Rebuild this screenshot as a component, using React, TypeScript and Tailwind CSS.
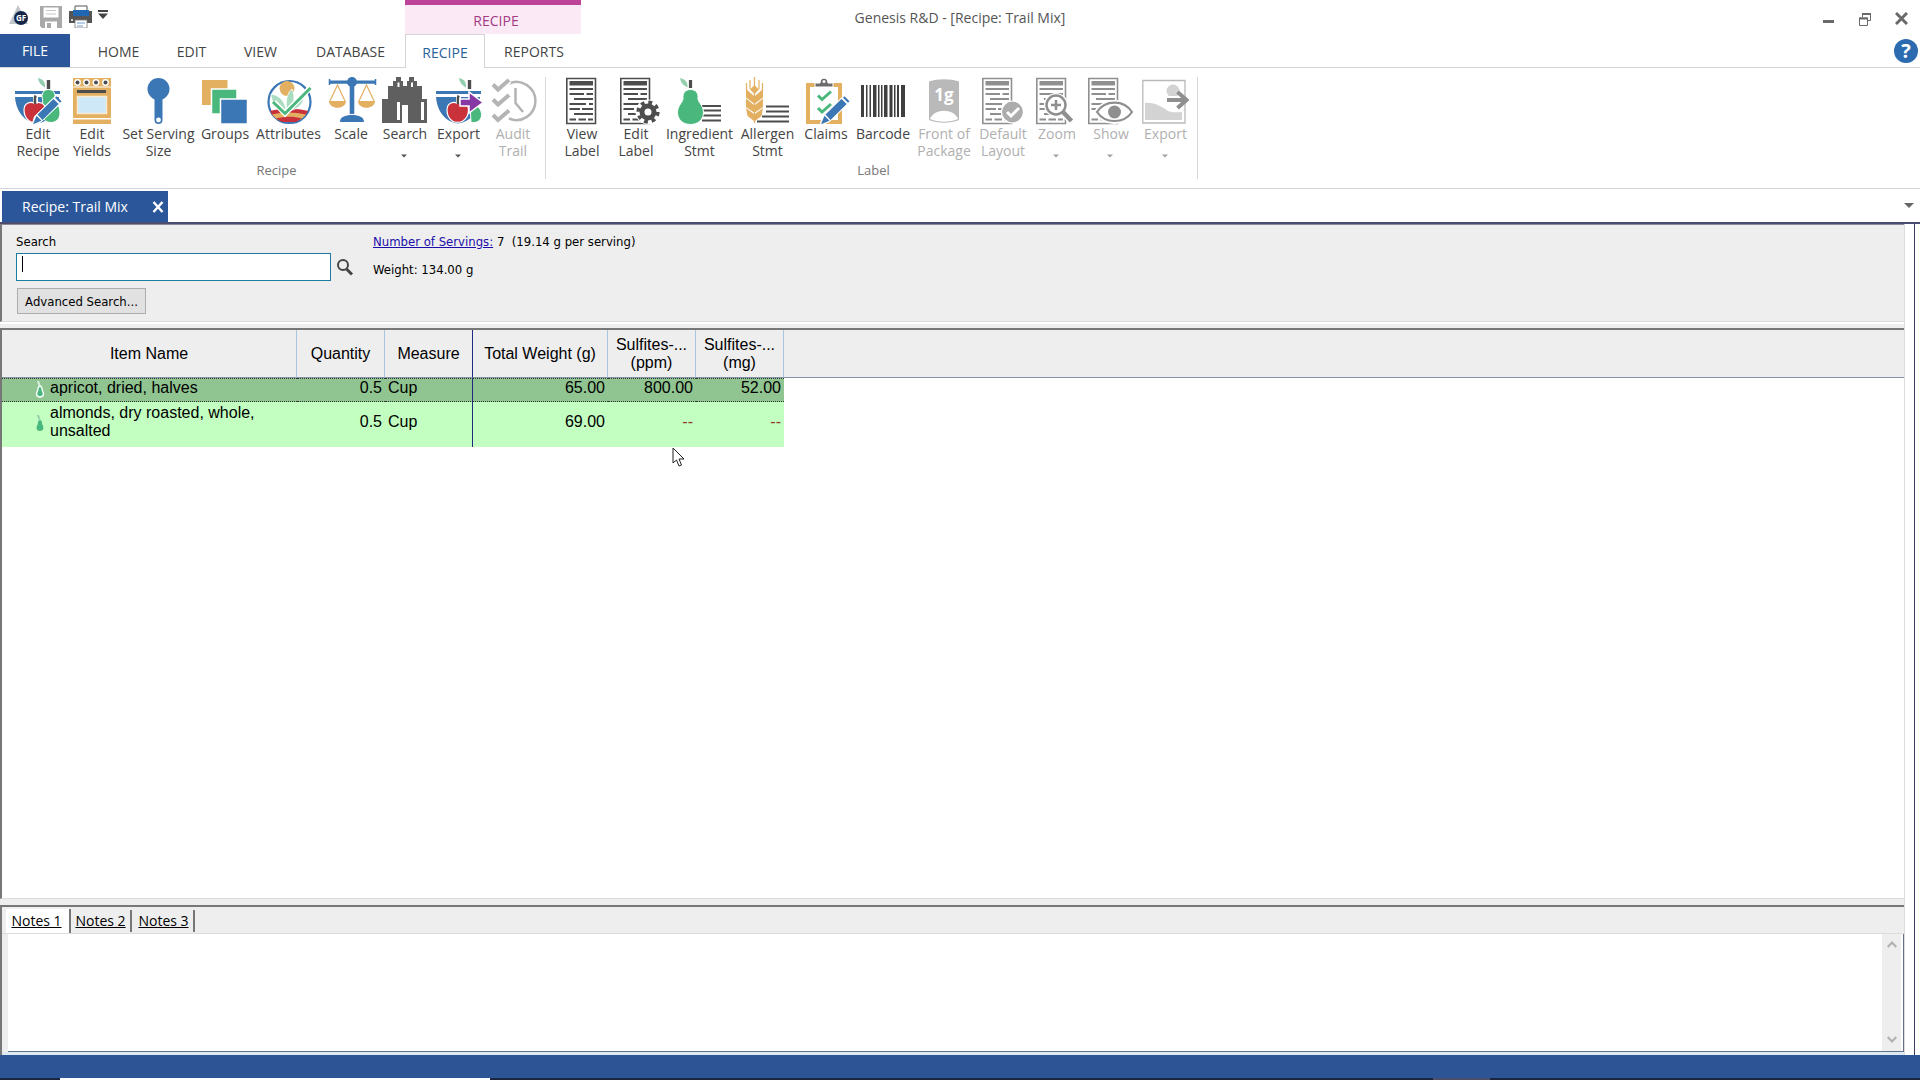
import type { ReactNode } from "react";

const STEEL = "#3b76b5";
const GREEN = "#4ab87c";
const RED = "#c9323a";
const TAN = "#e3b062";
const DARK = "#4d4d4d";
const MUTE = "#b4b4b4";
const MID = "#8f8f8f";

function Icon({ children }: { children: ReactNode }) {
  return (
    <svg viewBox="0 0 48 48" className="block size-12 overflow-visible" fill="none" aria-hidden="true">
      {children}
    </svg>
  );
}

function Pencil() {
  return (
    <g>
      <path d="M18 48 20.5 39.5 41 19.5 47.5 25.5 27 45Z" fill="#fff" stroke="#fff" strokeWidth="1" />
      <path d="M23.500 37.500 39.500 22 44.700 27 28.500 43Z" fill={STEEL} />
      <path d="M41 20.700 42.500 19.300 47.500 24.300 46 25.700Z" fill={STEEL} />
      <path d="M22.500 38.800 27.500 43.800 19 47.200Z" fill={STEEL} />
    </g>
  );
}

function Bowl() {
  return (
    <g>
      <path d="M1 14H46V17H1Z" fill={STEEL} />
      <path d="M1 20H45C45 33 36 45 23 46.500 10 45 2 34 1 20Z" fill={STEEL} />
      <path d="M34.500 3V12" stroke="#fff" strokeWidth="6" />
      <path d="M34.500 3V12" stroke={DARK} strokeWidth="3.400" />
      <path d="M24 1C29 2 31.500 5 31 10.500 26.500 8 24.500 5 24 1Z" fill="#93cfae" />
    </g>
  );
}

function Apple() {
  return (
    <g>
      <path
        d="M20.500 26.500C24 24 31.500 25.500 31.500 33 31.500 40 26 46.500 20.500 45 15 46.500 10 40 10 33 10 25.500 17 24 20.500 26.500Z"
        fill={RED}
        stroke="#fff"
        strokeWidth="1.200"
      />
      <path d="M21.500 19V26.500" stroke="#fff" strokeWidth="5" />
      <path d="M21.500 18.500C20.500 21 21 24 21 27" stroke={DARK} strokeWidth="2.500" />
    </g>
  );
}

function EditRecipeIcon() {
  return (
    <Icon>
      <Bowl />
      <path
        d="M34.500 12.500C39 12.500 41.500 16 41 20 40.800 24 46 28 46 36 46 42 42 45.500 37 45.500 31 45.500 28 41 28 35 28 28 29.500 25 28 20 27.800 16 30 12.500 34.500 12.500Z"
        fill={GREEN}
        stroke="#fff"
        strokeWidth="1"
      />
      <Apple />
      <Pencil />
    </Icon>
  );
}

function StoveIcon() {
  return (
    <Icon>
      <path d="M5 1H43V9.500H5ZM5 10.500H43V41H5ZM5 42.500H43V47H5Z" fill={TAN} />
      {[9.5, 18.5, 28, 37.5].map((x) => (
        <g key={x}>
          <circle cx={x} cy="5.500" r="3.400" fill="#fff" />
          <circle cx={x} cy="5.500" r="2" fill={DARK} />
        </g>
      ))}
      <path d="M9 13H38V16H9Z" fill={DARK} />
      <path d="M9.500 19.500H38.500V36.500H9.500Z" fill="#cfe8f8" stroke="#f7ead2" strokeWidth="1.500" />
    </Icon>
  );
}

function SpoonIcon() {
  return (
    <Icon>
      <circle cx="23.500" cy="12" r="11" fill={STEEL} />
      <path d="M19.500 20H27.500V43A4 4 0 0 1 19.500 43Z" fill={STEEL} />
      <circle cx="23.500" cy="43" r="2.400" fill="#fff" />
    </Icon>
  );
}

function GroupsIcon() {
  return (
    <Icon>
      <path d="M1 3H26.500V28H1Z" fill={TAN} />
      <path d="M10.500 12H36V37H10.500Z" fill={GREEN} stroke="#fff" strokeWidth="1.500" />
      <path d="M19.500 22H46.500V47H19.500Z" fill={STEEL} stroke="#fff" strokeWidth="1.500" />
    </Icon>
  );
}

function AttributesIcon() {
  return (
    <Icon>
      <circle cx="24.500" cy="25" r="21" fill="#fff" stroke={STEEL} strokeWidth="2.200" />
      <circle cx="22" cy="11.500" r="7.500" fill={TAN} />
      <path d="M5 34C16 31 32 31 43 34L40 39H8Z" fill={RED} />
      <path d="M7 37.500C18 34.500 30 35 41 37.500L36 42.500H12Z" fill={TAN} />
      <path d="M11 41.500C20 39 29 39 37 41.500L31 45H17Z" fill={RED} />
      <path d="M21 34C12 32 6 25 6 17 14 18 21 25 21 34ZM22 34C20 25 22 16 27 12 31 20 29 28 22 34ZM23 34C25 26 32 20 39 19 39 27 32 33 23 34Z" fill="#a9dcc0" stroke="#fff" strokeWidth=".8" />
      <path d="M9 25 20 36.500 45 11" stroke="#fff" strokeWidth="5.500" />
      <path d="M8 25 20 36.500 45.500 11" stroke={GREEN} strokeWidth="3" />
    </Icon>
  );
}

function ScaleIcon() {
  return (
    <Icon>
      <path d="M2 3.500H49V6.800H2Z" fill={STEEL} />
      <circle cx="25" cy="5" r="5" fill={STEEL} />
      <path d="M22.700 8H27.300V37H22.700ZM13 45C13 40 18 38 25 38 32 38 37 40 37 45Z" fill={STEEL} />
      <path d="M2.500 2V8M48.500 2V8" stroke={STEEL} strokeWidth="1.500" />
      <path d="M3 24 10.500 8 18 24M32 24 39.500 8 47 24" stroke={TAN} strokeWidth="1.200" />
      <path d="M2 24H19C19 33 2 33 2 24ZM31 24H48C48 33 31 33 31 24Z" fill={TAN} />
    </Icon>
  );
}

function BinocularsIcon() {
  return (
    <Icon>
      <path
        d="M12 4H15V0H20V4H22V9H26V4H28V0H33V4H36V9H41V22H46V46H27V28H21V46H1V22H7V9H12Z"
        fill="#5f5f5f"
      />
      <path d="M16.500 5.500H18.500V10H16.500ZM30 5.500H32V10H30ZM16 25H19V43H16ZM40 25H43V43H40Z" fill="#fff" />
    </Icon>
  );
}

function ExportIcon() {
  return (
    <Icon>
      <Bowl />
      <path d="M35 27C43 27 47 33 46.500 39 45.500 44 42 46 36 45.500Z" fill={GREEN} stroke="#fff" strokeWidth="1" />
      <g transform="translate(2 0)">
        <Apple />
      </g>
      <path d="M25 22H34V15L48 25.500 34 36V29H25Z" fill="#8638a4" stroke="#fff" strokeWidth="1.500" />
    </Icon>
  );
}

function AuditIcon() {
  return (
    <Icon>
      <path d="M20 6.500A19 19 0 1 1 20 41.500" stroke={MUTE} strokeWidth="2.500" />
      <path d="M26.500 11V26L34 35" stroke={MUTE} strokeWidth="2.500" />
      <path d="M4 7.500 9 12.500 20 3M4 22.500 9 27.500 20 18M4 38 9 43 20 33.500" stroke="#fff" strokeWidth="7" />
      <path d="M4 7.500 9 12.500 20 3M4 22.500 9 27.500 20 18M4 38 9 43 20 33.500" stroke={MUTE} strokeWidth="4" />
    </Icon>
  );
}

function Doc({ x, color }: { x: number; color: string }) {
  return (
    <g transform={`translate(${x} 0)`}>
      <path d="M.8 1.500H29.500V46.500H.8Z" fill="#fff" stroke={color} strokeWidth="1.600" />
      <path d="M3.500 4H27V8.500H3.500Z" fill={color} />
      <path
        d="M3.500 12H27M3.500 17H18M20.500 17H27M8 22H27M3.500 27H20M23 27H27M3.500 32H14M16 32H27M8 37H27M3.500 42.500H10M12.500 42.500H20M22 42.500H27"
        stroke={color}
        strokeWidth="2"
      />
    </g>
  );
}

function ViewLabelIcon() {
  return (
    <Icon>
      <Doc x={8} color={DARK} />
    </Icon>
  );
}

function EditLabelIcon() {
  return (
    <Icon>
      <Doc x={8} color={DARK} />
      <circle cx="36" cy="35" r="12.500" fill="#fff" />
      <circle cx="36" cy="35" r="9.800" stroke={DARK} strokeWidth="3.600" strokeDasharray="3.850 3.850" />
      <circle cx="36" cy="35" r="6" stroke={DARK} strokeWidth="5" />
    </Icon>
  );
}

function IngredientIcon() {
  return (
    <Icon>
      <path d="M26 29H45M26 33.500H45M26 38.500H45M26 43.500H45" stroke={DARK} strokeWidth="1.800" />
      <path
        d="M14.500 12.500C20 12.500 22.500 16.500 22 21 21.500 25 27.500 28 27.500 35.500 27.500 43 21.500 47.500 14.500 47.500 7.500 47.500 1.500 43 1.500 35.500 1.500 28 7.500 25 7 21 6.500 16.500 9 12.500 14.500 12.500Z"
        fill={GREEN}
        stroke="#fff"
      />
      <path d="M14.500 3V11" stroke={DARK} strokeWidth="3.200" />
      <path d="M4 1C9 2 12 5 11.500 10.500 7 8.500 4.500 5.500 4 1Z" fill="#93cfae" />
    </Icon>
  );
}

function WheatIcon() {
  return (
    <Icon>
      <path d="M22 29.500H45M22 34.500H45M18 39.500H45M13 44.500H45" stroke={DARK} strokeWidth="1.800" />
      <path d="M10.500 0V46M6 3V12M15 3V12M2.500 6V14M18.500 6V14" stroke={TAN} strokeWidth="1.200" />
      <path
        d="M10.500 8 15 12.500 10.500 17 6 12.500ZM2 12 10 19V26.500L2 20.500ZM19 12 11 19V26.500L19 20.500ZM2 21.500 10 28V35.500L2 30ZM19 21.500 11 28V35.500L19 30ZM2 31 10 37V44L3.500 39ZM19 31 11 37V44L17.500 39Z"
        fill={TAN}
      />
    </Icon>
  );
}

function ClaimsIcon() {
  return (
    <Icon>
      <path d="M6 8H38V45H6Z" fill="#fff" stroke={TAN} strokeWidth="4" />
      <path d="M13 10V6H18C18 -.5 26 -.5 26 6H31V10Z" fill="#6c6c6c" stroke="#fff" />
      <circle cx="22" cy="4.500" r="1.500" fill="#fff" />
      <path d="M16 18.500 20 22.500 29 14.500M16 31 20 35 29 27" stroke={GREEN} strokeWidth="3" />
      <Pencil />
    </Icon>
  );
}

function BarcodeIcon() {
  return (
    <Icon>
      <path
        d="M2 8H5V40H2ZM7 8H8.500V40H7ZM10.500 8H12V40H10.500ZM14 8H17.500V40H14ZM19 8H20.500V40H19ZM22 8H23.500V40H22ZM25 8H28.500V40H25ZM30.500 8H33.500V40H30.500ZM35 8H36.500V40H35ZM38 8H40V40H38ZM42 8H46V40H42Z"
        fill="#3f3f3f"
      />
    </Icon>
  );
}

function FrontIcon() {
  return (
    <Icon>
      <path d="M9 4.500C18 1.500 30 1.500 39 4.500V43C30 46.500 18 46.500 9 43Z" fill="#b9b9b9" />
      <path d="M10 42C14 31 34 31 38 42 30 45.500 18 45.500 10 42Z" fill="#fff" />
      <text x="24" y="24" textAnchor="middle" fill="#fff" fontSize="17" fontWeight="700" fontFamily="Open Sans, sans-serif">
        1g
      </text>
    </Icon>
  );
}

function DefaultIcon() {
  return (
    <Icon>
      <Doc x={3} color={MID} />
      <circle cx="33.500" cy="35" r="11" fill="#acacac" stroke="#fff" strokeWidth="1.200" />
      <path d="M28 35 32 39 40 31" stroke="#fff" strokeWidth="3" />
    </Icon>
  );
}

function ZoomIcon() {
  return (
    <Icon>
      <Doc x={3} color={MID} />
      <circle cx="23" cy="28" r="12" fill="#fff" />
      <path d="M30 35 39 44.500" stroke="#fff" strokeWidth="7.500" />
      <circle cx="23" cy="28" r="9.500" fill="#fff" stroke={MID} strokeWidth="2.500" />
      <path d="M30 35 38.500 44" stroke={MID} strokeWidth="4.500" />
      <path d="M23 23V33M18 28H28" stroke={MID} strokeWidth="2.500" />
    </Icon>
  );
}

function ShowIcon() {
  return (
    <Icon>
      <Doc x={1} color={MID} />
      <path d="M9.500 35C18 22 37 22 45.500 35 37 48 18 48 9.500 35Z" fill="#fff" stroke="#fff" strokeWidth="5" />
      <path d="M10 35C18 22.500 37 22.500 45 35 37 47 18 47 10 35Z" fill="#fff" stroke={MID} strokeWidth="2.200" />
      <circle cx="27.500" cy="35" r="6.500" fill={MID} />
    </Icon>
  );
}

function ExportImageIcon() {
  return (
    <Icon>
      <path d="M.8 3.500H43V46H.8Z" fill="#fff" stroke="#b9b9b9" strokeWidth="1.300" />
      <path d="M3 26C12 25 20 30 26 34 30 36 36 35 40 35V43H3Z" fill="#d3d3d3" />
      <circle cx="31" cy="14" r="6.500" fill="#d3d3d3" />
      <path d="M25 22.500H40" stroke="#fff" strokeWidth="7" />
      <path d="M25 23H44M35.500 15 44.500 23 35.500 31" stroke={MID} strokeWidth="4" />
    </Icon>
  );
}

type Tool = { lines: [string, string?]; icon: ReactNode; width: string; menu?: boolean; off?: boolean };

const recipeTools: Tool[] = [
  { lines: ["Edit", "Recipe"], icon: <EditRecipeIcon />, width: "w-[54px]" },
  { lines: ["Edit", "Yields"], icon: <StoveIcon />, width: "w-[54px]" },
  { lines: ["Set Serving", "Size"], icon: <SpoonIcon />, width: "w-[79px]" },
  { lines: ["Groups"], icon: <GroupsIcon />, width: "w-[54px]" },
  { lines: ["Attributes"], icon: <AttributesIcon />, width: "w-[73px]" },
  { lines: ["Scale"], icon: <ScaleIcon />, width: "w-[52px]" },
  { lines: ["Search"], icon: <BinocularsIcon />, width: "w-[56px]", menu: true },
  { lines: ["Export"], icon: <ExportIcon />, width: "w-[51px]", menu: true },
  { lines: ["Audit", "Trail"], icon: <AuditIcon />, width: "w-[58px]", off: true },
];

const labelTools: Tool[] = [
  { lines: ["View", "Label"], icon: <ViewLabelIcon />, width: "w-[54px]" },
  { lines: ["Edit", "Label"], icon: <EditLabelIcon />, width: "w-[54px]" },
  { lines: ["Ingredient", "Stmt"], icon: <IngredientIcon />, width: "w-[73px]" },
  { lines: ["Allergen", "Stmt"], icon: <WheatIcon />, width: "w-[63px]" },
  { lines: ["Claims"], icon: <ClaimsIcon />, width: "w-[54px]" },
  { lines: ["Barcode"], icon: <BarcodeIcon />, width: "w-[60px]" },
  { lines: ["Front of", "Package"], icon: <FrontIcon />, width: "w-[62px]", off: true },
  { lines: ["Default", "Layout"], icon: <DefaultIcon />, width: "w-[56px]", off: true },
  { lines: ["Zoom"], icon: <ZoomIcon />, width: "w-[52px]", menu: true, off: true },
  { lines: ["Show"], icon: <ShowIcon />, width: "w-[56px]", menu: true, off: true },
  { lines: ["Export"], icon: <ExportImageIcon />, width: "w-[53px]", menu: true, off: true },
];

function RibbonGroup({ name, tools, pad }: { name: string; tools: Tool[]; pad: string }) {
  return (
    <section className={`flex flex-col items-center border-r border-[#d8d8d8] ${pad}`} aria-label={name}>
      <div className="flex h-[85px] items-start">
        {tools.map((t) => (
          <button
            key={t.lines.join(" ")}
            type="button"
            disabled={t.off}
            className={`flex flex-col items-center whitespace-nowrap text-sm leading-[17px] ${t.width} ${t.off ? "text-[#b0b0b0]" : "text-[#444]"}`}
          >
            {t.icon}
            <span>{t.lines[0]}</span>
            {t.lines[1] && <span>{t.lines[1]}</span>}
            {t.menu && (
              <svg viewBox="0 0 6 4" className="mr-0.5 mt-3 h-1 w-1.5" aria-hidden="true">
                <path d="M0 .5H6L3 3.500Z" fill={t.off ? "#a0a0a0" : "#555"} />
              </svg>
            )}
          </button>
        ))}
      </div>
      <span className="text-[13px] leading-4 text-[#777]">{name}</span>
    </section>
  );
}

const menuTabs = [
  { name: "HOME", width: "w-[79px]" },
  { name: "EDIT", width: "w-[67px]" },
  { name: "VIEW", width: "w-[71px]" },
  { name: "DATABASE", width: "w-[109px]" },
  { name: "RECIPE", width: "w-[80px]", active: true },
  { name: "REPORTS", width: "w-[98px]" },
];

function TitleBar() {
  return (
    <header className="grid h-[34px] shrink-0 grid-cols-[1fr_auto_1fr] bg-white">
      <div className="flex">
        <div className="flex w-[405px] shrink-0 items-start pl-2 pt-1">
          <svg viewBox="0 0 24 24" className="size-6" aria-hidden="true">
            <path d="M10 1 20 20H1Z" fill="#c3c6cb" />
            <circle cx="13" cy="14" r="7" fill="#14264a" />
            <text x="13" y="17" textAnchor="middle" fill="#fff" fontSize="8" fontWeight="700" fontFamily="Open Sans, sans-serif">
              GF
            </text>
          </svg>
          <button type="button" aria-label="Save" className="ml-2">
            <svg viewBox="0 0 24 24" className="size-6" aria-hidden="true">
              <path d="M0 2H22V24H2L0 22Z" fill="#a9a9a9" />
              <path d="M3.500 3.500H18.500V13.500H3.500ZM5 17.500H17V24H5Z" fill="#fff" />
              <path d="M6 6.500H16M6 10H16" stroke="#c8c8c8" />
              <path d="M7 19H11V24H7Z" fill="#a9a9a9" />
            </svg>
          </button>
          <button type="button" aria-label="Print" className="ml-[5px]">
            <svg viewBox="0 0 24 24" className="size-6" aria-hidden="true">
              <path d="M0 7H23V19H0Z" fill="#555" />
              <path d="M5 1H19V12H5Z" fill="#fff" />
              <path d="M6 2H18V8H6Z" fill="#fff" stroke="#555" strokeWidth="1" />
              <path d="M4 6H20V12H4Z" fill="#2166b1" />
              <path d="M6 16H18V24H6Z" fill="#fff" stroke="#777" strokeWidth=".8" />
              <path d="M8 19H16M8 22H14" stroke="#6b9bd0" />
              <circle cx="3" cy="16" r="1" fill="#fff" />
            </svg>
          </button>
          <button type="button" aria-label="Customize toolbar" className="ml-1 mt-1.5">
            <svg viewBox="0 0 12 9" className="h-[9px] w-3" aria-hidden="true">
              <path d="M1 0H11V2H1ZM1 3.500H11L6 9Z" fill="#444" />
            </svg>
          </button>
        </div>
        <div className="flex w-44 shrink-0 items-center justify-center border-t-[5px] border-[#bd4399] bg-[#fbe9f5] pl-1.5 pt-[3px] text-sm text-[#a23b84]">
          RECIPE
        </div>
      </div>
      <h1 className="self-center pt-0.5 text-sm text-[#555]">Genesis R&amp;D - [Recipe: Trail Mix]</h1>
      <div className="flex items-start justify-end gap-6 pr-3 pt-3 text-[#6a6a6a]">
        <button type="button" aria-label="Minimize">
          <svg viewBox="0 0 12 14" className="h-3.5 w-3" aria-hidden="true">
            <path d="M1 8H12V11H1Z" fill="currentColor" />
          </svg>
        </button>
        <button type="button" aria-label="Restore">
          <svg viewBox="0 0 13 14" className="h-3.5 w-[13px]" fill="none" stroke="currentColor" aria-hidden="true">
            <path d="M4.500 5V1.500H12.500V8.500H10M1.500 6H9.500V13.500H1.500Z" />
            <path d="M4 2H13M1 6.500H10" strokeWidth="2" />
          </svg>
        </button>
        <button type="button" aria-label="Close">
          <svg viewBox="0 0 13 13" className="size-[13px]" stroke="currentColor" strokeWidth="3" aria-hidden="true">
            <path d="M1 1 12 12M12 1 1 12" />
          </svg>
        </button>
      </div>
    </header>
  );
}

function MenuBar() {
  return (
    <nav className="flex h-[34px] shrink-0 border-b border-[#d5d5d5] bg-white text-sm text-[#444]">
      <button type="button" className="mr-[9px] h-[33px] w-[70px] bg-[#2b579a] text-white">
        FILE
      </button>
      {menuTabs.map((t) =>
        t.active ? (
          <button
            key={t.name}
            type="button"
            aria-current="page"
            className={`h-[34px] border border-b-0 border-[#d5d5d5] bg-white pt-0.5 text-[#2b6199] ${t.width}`}
          >
            {t.name}
          </button>
        ) : (
          <button key={t.name} type="button" className={`pt-[3px] ${t.width}`}>
            {t.name}
          </button>
        ),
      )}
      <button
        type="button"
        aria-label="Help"
        className="ml-auto mr-0.5 mt-[5px] flex size-6 items-center justify-center rounded-full bg-[#2c6bb0] text-xl leading-none font-bold text-white"
      >
        ?
      </button>
    </nav>
  );
}

function PearIcon({ outlined }: { outlined?: boolean }) {
  return (
    <svg viewBox="0 0 12 18" className="mt-1 h-[18px] w-3 shrink-0" aria-hidden="true">
      <path
        d="M6 5C8 5 8 8 8.500 10 10 12 10 16 6 16 2 16 2 12 3.500 10 4 8 4 5 6 5Z"
        fill={GREEN}
        stroke={outlined ? "#fff" : "none"}
        strokeWidth="1.300"
      />
      <path d="M4 0 5.500 4.500" stroke={outlined ? "#d8f0df" : "#93cfae"} strokeWidth="2" />
    </svg>
  );
}

const items = [
  { name: "apricot, dried, halves", qty: "0.5", measure: "Cup", weight: "65.00", ppm: "800.00", mg: "52.00", selected: true },
  { name: "almonds, dry roasted, whole, unsalted", qty: "0.5", measure: "Cup", weight: "69.00", ppm: "--", mg: "--" },
];

function SearchPanel() {
  return (
    <section className="flex h-[98px] shrink-0 items-start border-b border-l-2 border-t border-b-[#dcdcdc] border-l-[#777] border-t-[#8a8a94] bg-[#eee] pl-3.5 pt-[7px] font-['DejaVu_Sans_Condensed','DejaVu_Sans',sans-serif] text-[13px] text-black">
      <div className="w-[357px] shrink-0">
        <label htmlFor="item-search" className="block leading-5">
          Search
        </label>
        <div className="mt-px flex items-center">
          <div className="relative">
            <input
              id="item-search"
              type="text"
              className="block h-7 w-[315px] border border-[#1c7ba0] bg-white px-1.5 outline-none"
            />
            <span className="absolute left-1.5 top-[3px] h-4 w-px bg-black" />
          </div>
          <button type="button" aria-label="Run search" className="ml-[5px]">
            <svg viewBox="0 0 18 18" className="size-[18px]" fill="none" stroke="#444" aria-hidden="true">
              <circle cx="7" cy="7" r="5" strokeWidth="2" />
              <path d="M10.500 11 16 16.500" strokeWidth="3" />
            </svg>
          </button>
        </div>
        <button type="button" className="ml-px mt-[7px] block h-[26px] w-[129px] border border-[#adadad] bg-[#e1e1e1] pt-0.5">
          Advanced Search...
        </button>
      </div>
      <div>
        <p className="whitespace-pre leading-5">
          <a href="#servings" className="text-[#1a0dab] underline">
            Number of Servings:
          </a>{" "}
          7{"  "}(19.14 g per serving)
        </p>
        <p className="mt-2 leading-5">Weight: 134.00 g</p>
      </div>
    </section>
  );
}

function HeaderCell({ children, last }: { children: ReactNode; last?: boolean }) {
  return (
    <th
      scope="col"
      className={`border-b border-r border-b-[#8494a8] p-0 font-normal ${last ? "border-r-[#1f2a80]" : "border-r-[#a9c5df]"}`}
    >
      {children}
    </th>
  );
}

function ItemTable() {
  return (
    <section className="min-h-0 flex-1 border-b border-l-2 border-t-2 border-b-[#dcdcdc] border-l-[#777] border-t-[#777] bg-white font-['Liberation_Sans',Arial,sans-serif] text-base leading-[18px] text-black">
      <table className="w-full table-fixed border-separate border-spacing-0">
        <colgroup>
          <col className="w-[295px]" />
          <col className="w-[88px]" />
          <col className="w-[88px]" />
          <col className="w-[135px]" />
          <col className="w-[88px]" />
          <col className="w-[88px]" />
          <col />
        </colgroup>
        <thead className="bg-[#eee]">
          <tr className="h-12">
            <HeaderCell>Item Name</HeaderCell>
            <HeaderCell>Quantity</HeaderCell>
            <HeaderCell last>Measure</HeaderCell>
            <HeaderCell>Total Weight (g)</HeaderCell>
            <HeaderCell>
              Sulfites-...
              <br />
              (ppm)
            </HeaderCell>
            <HeaderCell>
              Sulfites-...
              <br />
              (mg)
            </HeaderCell>
            <td className="border-b border-[#8494a8]" />
          </tr>
        </thead>
        <tbody>
          {items.map((r) => {
            const cell = r.selected
              ? "h-6 bg-[#90c490] border-y border-dotted border-[#333] p-0 align-top"
              : "h-[45px] bg-[#c3ffc0] p-0 pb-[5px] align-middle";
            const value = r.selected ? "pr-[3px]" : "pr-[3px] text-[#8a3a2a]";
            return (
              <tr key={r.name} aria-selected={r.selected ?? false}>
                <td className={cell}>
                  <div className={`flex items-center gap-1 pl-8 pr-6 ${r.selected ? "h-[18px]" : ""}`}>
                    <PearIcon outlined={r.selected} />
                    <span>{r.name}</span>
                  </div>
                </td>
                <td className={`${cell} text-right`}>
                  <span className="pr-[3px]">{r.qty}</span>
                </td>
                <td className={`${cell} border-r border-r-[#1f2a80] [border-right-style:solid]`}>
                  <span className="pl-[3px]">{r.measure}</span>
                </td>
                <td className={`${cell} text-right`}>
                  <span className="pr-[3px]">{r.weight}</span>
                </td>
                <td className={`${cell} text-right`}>
                  <span className={value}>{r.ppm}</span>
                </td>
                <td className={`${cell} text-right`}>
                  <span className={value}>{r.mg}</span>
                </td>
                <td />
              </tr>
            );
          })}
        </tbody>
      </table>
    </section>
  );
}

function Notes() {
  return (
    <section className="shrink-0 border-l-2 border-t-2 border-[#777] bg-[#eee] text-black">
      <div role="tablist" className="flex h-[27px] items-end border-b border-[#dcdcdc] pl-1 text-sm leading-[22px]">
        <button type="button" role="tab" aria-selected="true" className="h-6 w-[65px] border-r-2 border-[#777] bg-white pr-0.5 underline">
          Notes 1
        </button>
        <button type="button" role="tab" aria-selected="false" className="mb-px h-[22px] w-[61px] border-r-2 border-[#777] underline">
          Notes 2
        </button>
        <button type="button" role="tab" aria-selected="false" className="mb-px h-[22px] w-[63px] border-r-2 border-[#777] pl-0.5 underline">
          Notes 3
        </button>
      </div>
      <div className="ml-1.5 flex h-[118px] border-b border-r border-[#667085] bg-white">
        <textarea aria-label="Notes 1" className="block min-w-0 flex-1 resize-none bg-white p-1 text-sm outline-none" />
        <div className="mr-0.5 flex w-[19px] flex-col items-center justify-between bg-[#eee] pb-2 pt-[7px]">
          <button type="button" aria-label="Scroll up">
            <svg viewBox="0 0 10 7" className="block h-[7px] w-2.5" fill="none" stroke="#b0b0b0" strokeWidth="2" aria-hidden="true">
              <path d="M.7 6 5 1.500 9.300 6" />
            </svg>
          </button>
          <button type="button" aria-label="Scroll down">
            <svg viewBox="0 0 10 7" className="block h-[7px] w-2.5" fill="none" stroke="#b0b0b0" strokeWidth="2" aria-hidden="true">
              <path d="M.7 1 5 5.500 9.300 1" />
            </svg>
          </button>
        </div>
      </div>
      <div className="h-[3px] bg-[#dce9f2]" />
    </section>
  );
}

export default function App() {
  return (
    <div className="relative flex h-screen flex-col overflow-hidden bg-white font-['Open_Sans',sans-serif]">
      <TitleBar />
      <MenuBar />
      <div className="flex h-[121px] shrink-0 items-start border-b border-[#d5d5d5] bg-white">
        <div className="mt-[9px] flex h-[102px]">
          <RibbonGroup name="Recipe" tools={recipeTools} pad="pl-[11px] pr-[3px]" />
          <RibbonGroup name="Label" tools={labelTools} pad="pl-[9px] pr-[5px]" />
        </div>
      </div>
      <div className="flex h-[35px] shrink-0 items-end justify-between border-b-2 border-[#4a4d70] bg-white pl-0.5">
        <div className="flex h-[31px] w-[166px] items-center justify-between bg-[#2b579a] pl-5 pr-1 text-sm text-white">
          <span>Recipe: Trail Mix</span>
          <button type="button" aria-label="Close tab">
            <svg viewBox="0 0 12 12" className="size-3" stroke="#fff" strokeWidth="2.500" aria-hidden="true">
              <path d="M1.500 1 10.500 11M10.500 1 1.500 11" />
            </svg>
          </button>
        </div>
        <button type="button" aria-label="Open windows" className="mb-3.5 mr-1.5">
          <svg viewBox="0 0 10 5" className="h-[5px] w-2.5" aria-hidden="true">
            <path d="M0 0H10L5 5Z" fill="#666" />
          </svg>
        </button>
      </div>
      <div className="flex min-h-0 flex-1 pr-[5px]">
        <main className="flex min-w-0 flex-1 flex-col border-r border-[#dcdcdc] bg-[#eee]">
          <SearchPanel />
          <div className="h-1.5 shrink-0 border-t-2 border-white bg-[#eee]" />
          <ItemTable />
          <div className="h-1.5 shrink-0 bg-[#eee]" />
          <Notes />
        </main>
        <div className="w-2.5 shrink-0 border-r border-[#3a3f63] bg-white" />
      </div>
      <footer className="shrink-0 bg-[#2d5596] pt-[23px]">
        <div className="flex h-[2px] bg-[#1c2540]">
          <span className="ml-[60px] w-[430px] bg-white" />
          <span className="ml-[943px] w-[57px] bg-[#4a5068]" />
        </div>
      </footer>
      <svg viewBox="0 0 14 21" className="pointer-events-none absolute left-[672px] top-[447px] h-[21px] w-3.5" aria-hidden="true">
        <path d="M1 1V16L4.500 13 7 19 9.500 18 7 12H12Z" fill="#fff" stroke="#222" />
      </svg>
    </div>
  );
}
